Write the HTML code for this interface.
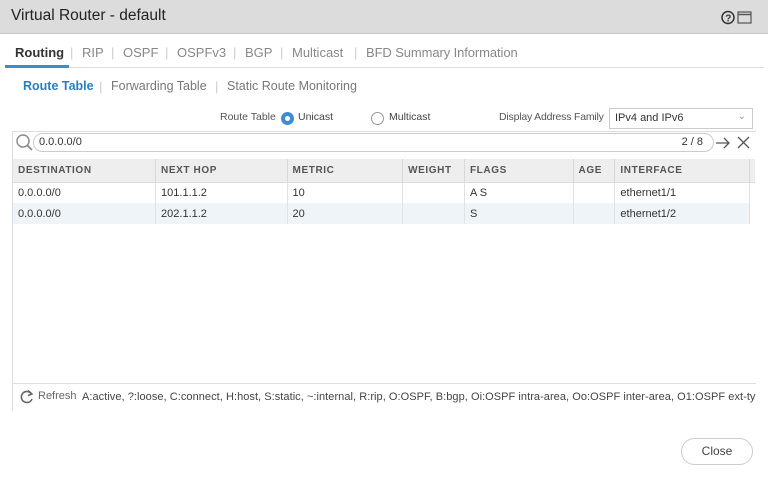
<!DOCTYPE html>
<html><head><style>
*{margin:0;padding:0;box-sizing:border-box}
body{width:768px;height:480px;overflow:hidden;background:#fff;font-family:"Liberation Sans",sans-serif;position:relative;color:#333}
.a{position:absolute;white-space:nowrap}
.title{left:0;top:0;width:768px;height:34px;background:#dcdcdc;border-bottom:1px solid #c8c8c8}
.t{position:absolute;top:45px;font-size:13px;color:#888}
.s{position:absolute;top:45px;font-size:13px;color:#ccc}
.u{position:absolute;top:79px;font-size:13px;color:#777}
table{border-collapse:collapse;font-size:11px}
th{background:#eee;height:23px;text-align:left;font-size:10px;letter-spacing:.6px;color:#555;font-weight:bold;padding-left:5px;border-right:1px solid #d8d8d8;border-bottom:1px solid #ddd}
td{height:21px;padding-left:5px;border-right:1px solid #e2e2e2;color:#333}
tr.b td{background:#eef4f7}
</style></head><body>
<div class="a title"></div>
<div class="a" style="left:11px;top:7px;font-size:15.5px;color:#222">Virtual Router - default</div>
<svg class="a" style="left:721px;top:10px" width="34" height="16"><circle cx="7" cy="7.5" r="6" fill="none" stroke="#333" stroke-width="1.5"/><text x="4.2" y="11.5" font-size="10" font-weight="bold" fill="#333" font-family="Liberation Sans">?</text><rect x="17" y="2" width="13" height="11" fill="none" stroke="#555" stroke-width="1.2"/><line x1="17" y1="4.5" x2="30" y2="4.5" stroke="#555" stroke-width="1.5"/></svg>
<div class="t" style="left:15px;color:#333;font-weight:bold">Routing</div>
<div class="s" style="left:70px">|</div><div class="t" style="left:82px">RIP</div>
<div class="s" style="left:111px">|</div><div class="t" style="left:123px">OSPF</div>
<div class="s" style="left:165px">|</div><div class="t" style="left:177px">OSPFv3</div>
<div class="s" style="left:233px">|</div><div class="t" style="left:245px">BGP</div>
<div class="s" style="left:280px">|</div><div class="t" style="left:292px">Multicast</div>
<div class="s" style="left:354px">|</div><div class="t" style="left:366px;letter-spacing:-.1px">BFD Summary Information</div>
<div class="a" style="left:5px;top:67px;width:759px;height:1px;background:#ddd"></div>
<div class="a" style="left:5px;top:65px;width:64px;height:3px;background:#3c8dc5"></div>
<div class="u" style="left:23px;color:#2a7fbf;font-weight:bold;font-size:12.5px">Route Table</div>
<div class="u" style="left:99px;color:#ccc">|</div>
<div class="u" style="left:111px;font-size:12.5px">Forwarding Table</div>
<div class="u" style="left:215px;color:#ccc">|</div>
<div class="u" style="left:227px;font-size:12.5px">Static Route Monitoring</div>
<div class="a" style="left:220px;top:111px;font-size:10.5px;color:#555">Route Table</div>
<div class="a" style="left:281px;top:112px;width:13px;height:13px;border-radius:50%;background:#3c8dd5"><div style="margin:4px;width:5px;height:5px;border-radius:50%;background:#fff"></div></div>
<div class="a" style="left:298px;top:111px;font-size:10.5px;color:#444">Unicast</div>
<div class="a" style="left:371px;top:112px;width:13px;height:13px;border-radius:50%;border:1px solid #999"></div>
<div class="a" style="left:389px;top:111px;font-size:10.5px;color:#444">Multicast</div>
<div class="a" style="left:499px;top:111px;font-size:10.5px;color:#555;letter-spacing:-.2px">Display Address Family</div>
<div class="a" style="left:609px;top:108px;width:144px;height:21px;border:1px solid #ccc;font-size:11px;padding:3px 5px;color:#333">IPv4 and IPv6<span style="position:absolute;right:6px;top:2px;color:#999;font-size:10px">&#8964;</span></div>
<div class="a" style="left:12px;top:131px;width:744px;height:280px;border-left:1px solid #ddd;border-top:1px solid #ddd"></div>
<svg class="a" style="left:15px;top:133px" width="20" height="20"><circle cx="8" cy="8" r="6" fill="none" stroke="#888" stroke-width="1.4"/><line x1="12.5" y1="12.5" x2="17" y2="17" stroke="#888" stroke-width="1.6"/></svg>
<div class="a" style="left:33px;top:133px;width:681px;height:19px;border:1px solid #ccc;border-radius:10px;font-size:11px;padding:2px 5px">0.0.0.0/0<span style="position:absolute;right:10px;top:2px">2 / 8</span></div>
<svg class="a" style="left:714px;top:134px" width="40" height="18"><path d="M2 9H15M10 4L15 9L10 14" fill="none" stroke="#555" stroke-width="1.3"/><path d="M24 3L35 14M35 3L24 14" stroke="#555" stroke-width="1.3"/></svg>
<table class="a" style="left:13px;top:159px;width:742px">
<tr><th style="width:143px">DESTINATION</th><th style="width:132px">NEXT HOP</th><th style="width:116px">METRIC</th><th style="width:62px">WEIGHT</th><th style="width:109px">FLAGS</th><th style="width:42px">AGE</th><th style="width:135px">INTERFACE</th><th style="border-right:0"></th></tr>
<tr><td>0.0.0.0/0</td><td>101.1.1.2</td><td>10</td><td></td><td>A S</td><td></td><td>ethernet1/1</td><td style="border:0;background:#fff"></td></tr>
<tr class="b"><td>0.0.0.0/0</td><td>202.1.1.2</td><td>20</td><td></td><td>S</td><td></td><td>ethernet1/2</td><td style="border:0;background:#fff"></td></tr>
</table>
<div class="a" style="left:13px;top:383px;width:743px;height:1px;background:#ddd"></div>
<svg class="a" style="left:19px;top:389px" width="16" height="16"><path d="M12.5 5A5.5 5.5 0 1 0 13 10" fill="none" stroke="#666" stroke-width="1.6"/><path d="M9 1.5L13 5L9 6.5" fill="none" stroke="#666" stroke-width="1.5"/></svg>
<div class="a" style="left:38px;top:390px;font-size:11px;color:#666">Refresh</div>
<div class="a" style="left:82px;top:391px;width:674px;overflow:hidden;font-size:11px;color:#444;letter-spacing:.05px">A:active, ?:loose, C:connect, H:host, S:static, ~:internal, R:rip, O:OSPF, B:bgp, Oi:OSPF intra-area, Oo:OSPF inter-area, O1:OSPF ext-type</div>
<div class="a" style="left:681px;top:438px;width:72px;height:27px;border:1px solid #ccc;border-radius:14px;font-size:12px;text-align:center;line-height:25px;color:#444">Close</div>
</body></html>
